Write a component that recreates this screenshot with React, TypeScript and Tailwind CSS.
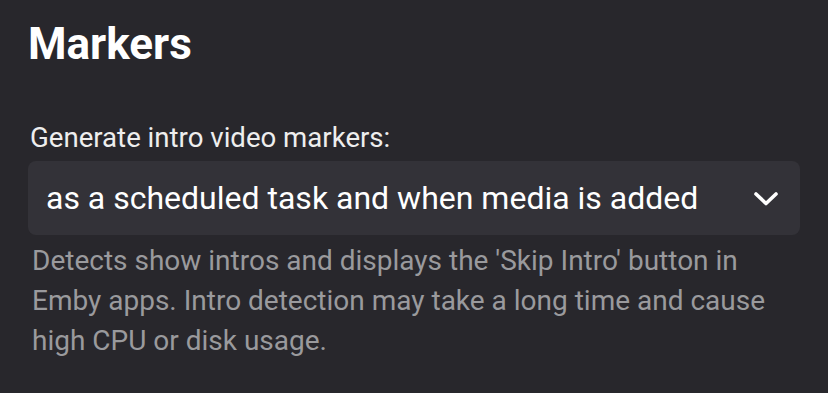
export default function App() {
  return (
    <div className="min-h-[393px] w-full bg-[#28272c] font-['Roboto',sans-serif] text-white pl-[28px] pr-[28px] pt-[18px]">
      <h1 className="text-[44px] font-bold leading-[52px]">Markers</h1>

      <div className="mt-[52px]">
        <label className="block pl-[2px] text-[27.6px] leading-[32px] text-[#eeeeee]">Generate intro video markers:</label>
        <div className="mt-[7px] flex h-[74px] items-center justify-between rounded-[8px] bg-[#333238] pl-[18px] pr-[21px]">
          <span className="text-[32px] text-white">as a scheduled task and when media is added</span>
          <svg width="26" height="16" viewBox="0 0 26 16" className="mt-[2px]">
            <polyline points="3,3 13,12.5 23,3" fill="none" stroke="white" strokeWidth="3.6" strokeLinecap="round" strokeLinejoin="round" />
          </svg>
        </div>
        <p className="mt-[6px] pl-[4px] text-[28px] leading-[40px] text-[#9a9a9d]">
          Detects show intros and displays the 'Skip Intro' button in Emby apps. Intro detection may take a long time and cause high CPU or disk usage.
        </p>
      </div>
    </div>
  );
}
